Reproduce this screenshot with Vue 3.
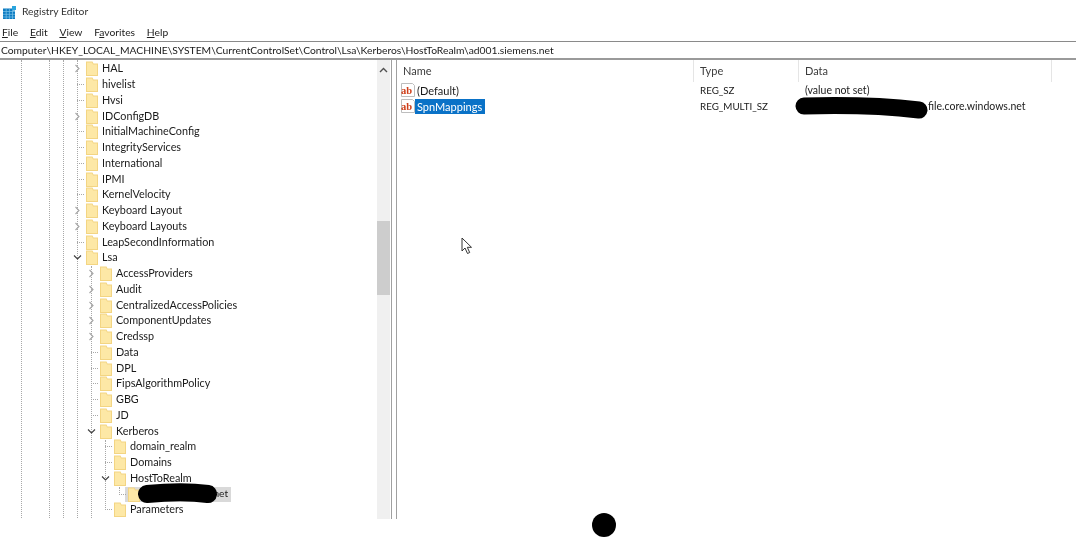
<template>
  <div class="app">
    <div class="titlebar">
      <svg class="appicon" width="17" height="17" viewBox="0 0 17 17">
        <path fill="#0e7cc2" d="M3 5.5h10v2h2V16H3z"/>
        <path stroke="#7cc4ea" stroke-width="0.7" fill="none" d="M6.2 5.5V16M9.4 5.5V16M12.5 5.5V16M3 8.5h12M3 11.3h12M3 14h12"/>
        <path fill="#2aa5de" d="M12 3h4v4h-4z"/>
      </svg>
      <span>Registry Editor</span>
    </div>
    <div class="menubar">
      <span v-for="m in menus" :key="m.rest">{{ m.pre }}<u>{{ m.key }}</u>{{ m.rest }}</span>
    </div>
    <div class="address">Computer\HKEY_LOCAL_MACHINE\SYSTEM\CurrentControlSet\Control\Lsa\Kerberos\HostToRealm\ad001.siemens.net</div>
    <div class="main">
      <div class="tree">
        <i v-for="g in guides" :key="g.x + '-' + g.top" class="guide" :style="{ left: g.x + 'px', top: g.top + 'px', height: g.h + 'px' }"></i>
        <div v-for="r in rows" :key="r.name" class="row" :style="{ paddingLeft: 73 + r.depth * 14 + 'px' }">
          <span class="twist">
            <svg v-if="r.open" width="9" height="9" viewBox="0 0 9 9"><path d="M1 2.5l3.5 3.5L8 2.5" fill="none" stroke="#404040" stroke-width="1.1"/></svg>
            <svg v-else-if="r.more" width="9" height="9" viewBox="0 0 9 9"><path d="M2.5 1L6 4.5 2.5 8" fill="none" stroke="#a6a6a6" stroke-width="1.1"/></svg>
            <i v-else class="dash"></i>
          </span>
          <span class="item" :class="{ selected: r.selected }">
            <svg class="folder" width="12" height="15" viewBox="0 0 12 15">
              <path d="M0 0.5h6.5l1 2H12V15H0z" fill="#f3d583"/>
              <path d="M1 1.5h5l1 2h4V14H1z" fill="#fde8a6"/>
            </svg>
            <span class="label">{{ r.name }}</span>
          </span>
        </div>
        <svg class="scribble" width="80" height="22" viewBox="0 0 80 22"><path d="M9 11C30 9 55 9 70 11" stroke="#000" stroke-width="18" stroke-linecap="round" fill="none"/></svg>
      </div>
      <div class="scrollbar">
        <svg class="arrow" width="9" height="6" viewBox="0 0 9 6"><path d="M1 5l3.5-3.5L8 5" fill="none" stroke="#505050" stroke-width="1.4"/></svg>
        <div class="thumb"></div>
      </div>
      <div class="splitter"></div>
      <div class="list">
        <div class="head">
          <span class="col c1">Name</span>
          <span class="col c2">Type</span>
          <span class="col c3">Data</span>
        </div>
        <div v-for="v in values" :key="v.name" class="vrow">
          <span class="c1 vname">
            <svg class="ab" width="15" height="15" viewBox="0 0 15 15">
              <path d="M1.5 0.5h11l2 2v11h-13z" fill="#fff" stroke="#bdbdbd"/>
              <text x="1" y="10.5" font-size="10.5" font-weight="700" font-family="Liberation Serif, serif" fill="#cf3f1a">ab</text>
            </svg>
            <span class="vtext" :class="{ sel: v.selected }">{{ v.name }}</span>
          </span>
          <span class="c2 vtype">{{ v.type }}</span>
          <span class="c3 vdata" :class="{ tail: v.tail }">{{ v.data }}</span>
        </div>
        <svg class="scribble2" width="134" height="24" viewBox="0 0 134 24"><path d="M9 9C45 8 90 9 124 13" stroke="#000" stroke-width="17" stroke-linecap="round" fill="none"/></svg>
        <svg class="cursor" width="12" height="18" viewBox="0 0 12 18"><path d="M1 1v13l3-3 2.5 5.5 2.2-1-2.4-5.2H10.500z" fill="#fff" stroke="#333" stroke-width="1"/></svg>
      </div>
    </div>
    <div class="dot"></div>
  </div>
</template>

<script setup>
const menus = [
  { pre: '', key: 'F', rest: 'ile' },
  { pre: '', key: 'E', rest: 'dit' },
  { pre: '', key: 'V', rest: 'iew' },
  { pre: 'F', key: 'a', rest: 'vorites' },
  { pre: '', key: 'H', rest: 'elp' },
]

const rows = [
  { name: 'HAL', depth: 0, more: true },
  { name: 'hivelist', depth: 0 },
  { name: 'Hvsi', depth: 0 },
  { name: 'IDConfigDB', depth: 0, more: true },
  { name: 'InitialMachineConfig', depth: 0 },
  { name: 'IntegrityServices', depth: 0 },
  { name: 'International', depth: 0 },
  { name: 'IPMI', depth: 0 },
  { name: 'KernelVelocity', depth: 0 },
  { name: 'Keyboard Layout', depth: 0, more: true },
  { name: 'Keyboard Layouts', depth: 0, more: true },
  { name: 'LeapSecondInformation', depth: 0 },
  { name: 'Lsa', depth: 0, open: true },
  { name: 'AccessProviders', depth: 1, more: true },
  { name: 'Audit', depth: 1, more: true },
  { name: 'CentralizedAccessPolicies', depth: 1, more: true },
  { name: 'ComponentUpdates', depth: 1, more: true },
  { name: 'Credssp', depth: 1, more: true },
  { name: 'Data', depth: 1 },
  { name: 'DPL', depth: 1 },
  { name: 'FipsAlgorithmPolicy', depth: 1 },
  { name: 'GBG', depth: 1 },
  { name: 'JD', depth: 1 },
  { name: 'Kerberos', depth: 1, open: true },
  { name: 'domain_realm', depth: 2 },
  { name: 'Domains', depth: 2 },
  { name: 'HostToRealm', depth: 2, open: true },
  { name: 'ad001.siemens.net', depth: 3, selected: true },
  { name: 'Parameters', depth: 2 },
]

const guides = [
  { x: 21, top: 0, h: 458 },
  { x: 49, top: 0, h: 458 },
  { x: 63, top: 0, h: 458 },
  { x: 77, top: 0, h: 458 },
  { x: 91, top: 206, h: 252 },
  { x: 105, top: 380, h: 70 },
  { x: 119, top: 427, h: 8 },
]

const values = [
  { name: '(Default)', type: 'REG_SZ', data: '(value not set)' },
  { name: 'SpnMappings', type: 'REG_MULTI_SZ', data: 'file.core.windows.net', selected: true, tail: true },
]
</script>

<style>
html, body {
  background: #fff;
}
</style>

<style scoped>
.app {
  position: relative;
  width: 1076px;
  height: 538px;
  overflow: hidden;
  background: #fff;
  color: #1a1a1a;
  font-family: Lato, "Open Sans", sans-serif;
  font-size: 11px;
  filter: blur(0.3px);
}

.titlebar {
  display: flex;
  align-items: center;
  gap: 5px;
  height: 22px;
  font-size: 10.3px;
  color: #333;
}

.menubar {
  display: flex;
  gap: 11.8px;
  height: 19px;
  align-items: center;
  padding-left: 2px;
  color: #222;
  font-size: 10.3px;
}

.address {
  box-sizing: border-box;
  height: 19px;
  line-height: 16px;
  padding-left: 1px;
  border-top: 1px solid #8a8a8a;
  border-bottom: 2px solid #9a9a9a;
  white-space: nowrap;
  font-size: 10.3px;
}

.main {
  display: flex;
  height: 459px;
}

.tree {
  position: relative;
  width: 377px;
  flex: none;
  overflow: hidden;
  padding-top: 1px;
  font-size: 10.8px;
}

.guide {
  position: absolute;
  width: 0;
  border-left: 1px dotted #a8a8a8;
}

.row {
  display: flex;
  align-items: center;
  height: 15.75px;
  white-space: nowrap;
}

.twist {
  display: flex;
  align-items: center;
  justify-content: center;
  width: 13px;
  flex: none;
  position: relative;
  left: -2px;
}

.dash {
  display: block;
  width: 7px;
  margin-left: 5px;
  border-top: 1px dotted #a8a8a8;
}

.item {
  display: flex;
  align-items: center;
}

.item.selected {
  background: #d9d9d9;
  margin-left: -3px;
  padding-left: 3px;
  height: 15px;
}

.item.selected .label {
  font-size: 10.2px;
}

.folder {
  flex: none;
}

.label {
  margin: 0 0 2px 4px;
  padding-right: 3px;
  line-height: 15px;
}

.scribble {
  position: absolute;
  left: 138px;
  top: 423px;
}

.scrollbar {
  position: relative;
  flex: none;
  width: 13px;
  background: #f0f0f0;
}

.arrow {
  position: absolute;
  left: 2px;
  top: 7px;
}

.thumb {
  position: absolute;
  top: 161px;
  left: 0;
  width: 13px;
  height: 74px;
  background: #cdcdcd;
}

.splitter {
  flex: none;
  width: 6px;
  box-sizing: border-box;
  margin-left: 1px;
  border-left: 1px solid #a0a0a0;
  border-right: 1px solid #a0a0a0;
}

.list {
  position: relative;
  flex: 1;
}

.head, .vrow {
  display: flex;
  align-items: center;
}

.head {
  height: 22px;
  color: #3c3c3c;
}

.vrow {
  height: 16px;
}

.c1 {
  width: 297px;
  flex: none;
  box-sizing: border-box;
}

.c2 {
  width: 105px;
  flex: none;
  box-sizing: border-box;
  padding-left: 6px;
}

.c3 {
  width: 253px;
  flex: none;
  box-sizing: border-box;
  padding-left: 6px;
}

.col {
  height: 22px;
  line-height: 22px;
  border-right: 1px solid #e5e5e5;
}

.head .c1 {
  padding-left: 6px;
}

.vname {
  display: flex;
  align-items: center;
  padding-left: 3px;
}

.vtext {
  padding: 0 3px 0 2px;
  line-height: 15px;
}

.vtext.sel {
  background: #0a72c7;
  color: #fff;
}

.vtype {
  font-size: 9.8px;
}

.vdata {
  font-size: 10.5px;
}

.vdata.tail {
  padding-left: 129px;
  white-space: nowrap;
}

.scribble2 {
  position: absolute;
  left: 398px;
  top: 37px;
}

.cursor {
  position: absolute;
  left: 64px;
  top: 177px;
}

.dot {
  position: absolute;
  left: 592px;
  top: 513px;
  width: 24px;
  height: 24px;
  border-radius: 50%;
  background: #000;
}
</style>
